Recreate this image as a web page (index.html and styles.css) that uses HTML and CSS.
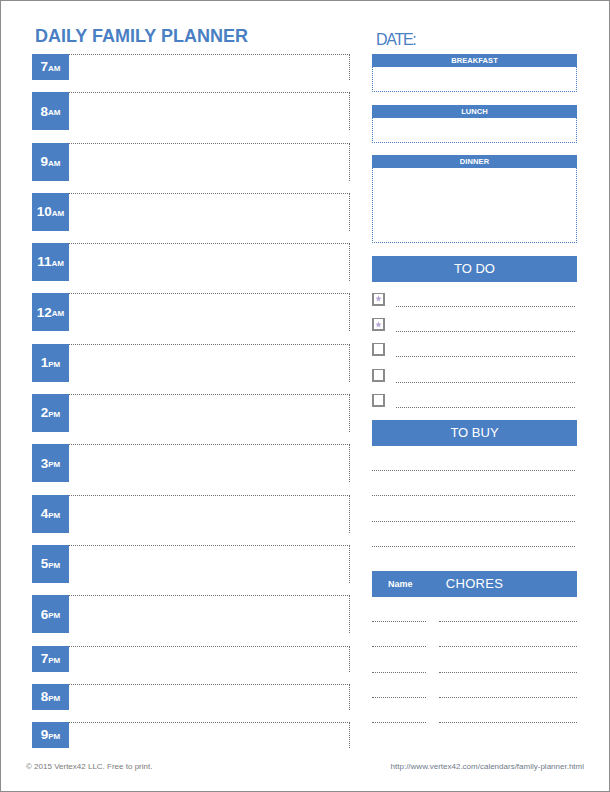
FILE: index.html
```html
<!DOCTYPE html>
<html lang="en">
<head>
<meta charset="utf-8">
<title>Daily Family Planner</title>
<link rel="stylesheet" href="styles.css">
</head>
<body>
<div class="page">
  <div class="main">
    <div class="left">
      <h1 class="title">DAILY FAMILY PLANNER</h1>
      <div class="hours">
        <div class="hour short"><div class="time">7<span>AM</span></div><div class="slot"></div></div>
        <div class="hour"><div class="time">8<span>AM</span></div><div class="slot"></div></div>
        <div class="hour"><div class="time">9<span>AM</span></div><div class="slot"></div></div>
        <div class="hour"><div class="time">10<span>AM</span></div><div class="slot"></div></div>
        <div class="hour"><div class="time">11<span>AM</span></div><div class="slot"></div></div>
        <div class="hour"><div class="time">12<span>AM</span></div><div class="slot"></div></div>
        <div class="hour"><div class="time">1<span>PM</span></div><div class="slot"></div></div>
        <div class="hour"><div class="time">2<span>PM</span></div><div class="slot"></div></div>
        <div class="hour"><div class="time">3<span>PM</span></div><div class="slot"></div></div>
        <div class="hour"><div class="time">4<span>PM</span></div><div class="slot"></div></div>
        <div class="hour"><div class="time">5<span>PM</span></div><div class="slot"></div></div>
        <div class="hour"><div class="time">6<span>PM</span></div><div class="slot"></div></div>
        <div class="hour short"><div class="time">7<span>PM</span></div><div class="slot"></div></div>
        <div class="hour short"><div class="time">8<span>PM</span></div><div class="slot"></div></div>
        <div class="hour short"><div class="time">9<span>PM</span></div><div class="slot"></div></div>
      </div>
    </div>
    <div class="right">
      <div class="date">DATE:</div>
      <div class="meal">
        <div class="meal-head">BREAKFAST</div>
        <div class="meal-box"></div>
      </div>
      <div class="meal">
        <div class="meal-head">LUNCH</div>
        <div class="meal-box"></div>
      </div>
      <div class="meal">
        <div class="meal-head">DINNER</div>
        <div class="meal-box tall"></div>
      </div>
      <div class="band">TO DO</div>
      <div class="todo">
        <div class="todo-item"><span class="check"><svg viewBox="0 0 10 10" width="7" height="7"><polygon points="5,0.5 6.2,3.6 9.5,3.8 7,5.9 7.8,9.3 5,7.4 2.2,9.3 3,5.9 0.5,3.8 3.8,3.6" fill="#b9a7d6"/></svg></span><span class="todo-line"></span></div>
        <div class="todo-item"><span class="check"><svg viewBox="0 0 10 10" width="7" height="7"><polygon points="5,0.5 6.2,3.6 9.5,3.8 7,5.9 7.8,9.3 5,7.4 2.2,9.3 3,5.9 0.5,3.8 3.8,3.6" fill="#b9a7d6"/></svg></span><span class="todo-line"></span></div>
        <div class="todo-item"><span class="check"></span><span class="todo-line"></span></div>
        <div class="todo-item"><span class="check"></span><span class="todo-line"></span></div>
        <div class="todo-item"><span class="check"></span><span class="todo-line"></span></div>
      </div>
      <div class="band">TO BUY</div>
      <div class="buy">
        <div class="buy-line"></div>
        <div class="buy-line"></div>
        <div class="buy-line"></div>
        <div class="buy-line"></div>
      </div>
      <div class="band chores-head"><span class="name">Name</span><span>CHORES</span><span></span></div>
      <div class="chores">
        <div class="chore-row"><span class="chore-name"></span><span class="chore-task"></span></div>
        <div class="chore-row"><span class="chore-name"></span><span class="chore-task"></span></div>
        <div class="chore-row"><span class="chore-name"></span><span class="chore-task"></span></div>
        <div class="chore-row"><span class="chore-name"></span><span class="chore-task"></span></div>
        <div class="chore-row"><span class="chore-name"></span><span class="chore-task"></span></div>
      </div>
    </div>
  </div>
  <div class="footer">
    <span>© 2015 Vertex42 LLC. Free to print.</span>
    <span class="url">http://www.vertex42.com/calendars/family-planner.html</span>
  </div>
</div>
</body>
</html>
```

FILE: styles.css
```css
html, body {
  margin: 0;
  padding: 0;
  background: #ffffff;
}

body {
  font-family: "Liberation Sans", Arial, sans-serif;
}

.page {
  width: 610px;
  height: 792px;
  box-sizing: border-box;
  border: 1px solid #8c8c8c;
  display: flex;
  flex-direction: column;
  overflow: hidden;
}

.main {
  display: flex;
  gap: 22px;
  padding: 24px 0 0 31px;
}

.left {
  width: 318px;
}

.title {
  margin: 0 0 7px;
  padding-left: 3px;
  height: 22px;
  font-size: 18px;
  line-height: 22px;
  font-weight: bold;
  color: #4a7fc4;
}

.hour {
  display: flex;
  height: 38px;
  margin-bottom: 12.3px;
}

.hour.short {
  height: 26px;
}

.time {
  width: 37px;
  background: #4a7fc4;
  color: #ffffff;
  font-weight: bold;
  font-size: 13.5px;
  display: flex;
  align-items: center;
  justify-content: center;
  line-height: 1;
}

.time span {
  font-size: 8px;
  align-self: center;
  margin-top: 4px;
}

.slot {
  flex: 1;
  border-top: 1px dotted #6e6e6e;
  border-right: 1px dotted #6e6e6e;
}

.right {
  width: 205px;
  display: flex;
  flex-direction: column;
}

.date {
  padding: 5px 0 0 4px;
  height: 20px;
  margin-bottom: 4px;
  font-size: 16px;
  line-height: 20px;
  letter-spacing: -1.3px;
  color: #4a7fc4;
}

.meal {
  margin-bottom: 12.6px;
}

.meal-head {
  height: 13px;
  background: #4a7fc4;
  color: #ffffff;
  font-size: 7.5px;
  font-weight: bold;
  line-height: 13px;
  text-align: center;
  letter-spacing: 0.1px;
}

.meal-box {
  height: 25px;
  box-sizing: border-box;
  border: 1px dotted #4a7fc4;
  border-top: none;
}

.meal-box.tall {
  height: 75px;
}

.band {
  height: 26px;
  background: #4a7fc4;
  color: #ffffff;
  font-size: 13px;
  line-height: 26px;
  text-align: center;
}

.todo {
  padding-top: 11px;
  margin-bottom: 0.5px;
}

.todo-item {
  display: flex;
  height: 14px;
  margin-bottom: 11.3px;
}

.check {
  width: 13px;
  height: 13px;
  box-sizing: border-box;
  border: 2px solid #8a8a8a;
  border-top-width: 1.5px;
  display: flex;
  align-items: center;
  justify-content: center;
  margin-right: 11px;
}

.todo-line {
  flex: 1;
  margin-right: 2px;
  border-bottom: 1px dotted #6e6e6e;
}

.buy {
  margin-bottom: 23.8px;
}

.buy-line {
  height: 25.3px;
  box-sizing: border-box;
  margin-right: 2px;
  border-bottom: 1px dotted #6e6e6e;
}

.chores-head {
  display: grid;
  grid-template-columns: 1fr auto 1fr;
  letter-spacing: 0.3px;
}

.chores-head .name {
  text-align: left;
  padding-left: 16px;
  font-size: 9px;
  font-weight: bold;
  letter-spacing: 0;
}

.chore-row {
  display: flex;
  gap: 13px;
  height: 25.3px;
}

.chore-name {
  width: 54px;
  border-bottom: 1px dotted #6e6e6e;
}

.chore-task {
  flex: 1;
  border-bottom: 1px dotted #6e6e6e;
}

.footer {
  margin-top: auto;
  display: flex;
  justify-content: space-between;
  padding: 0 25px 20px;
  font-size: 8px;
  line-height: 9px;
  color: #7a7a7a;
}

.footer .url {
  color: #6f7a8a;
}
```
